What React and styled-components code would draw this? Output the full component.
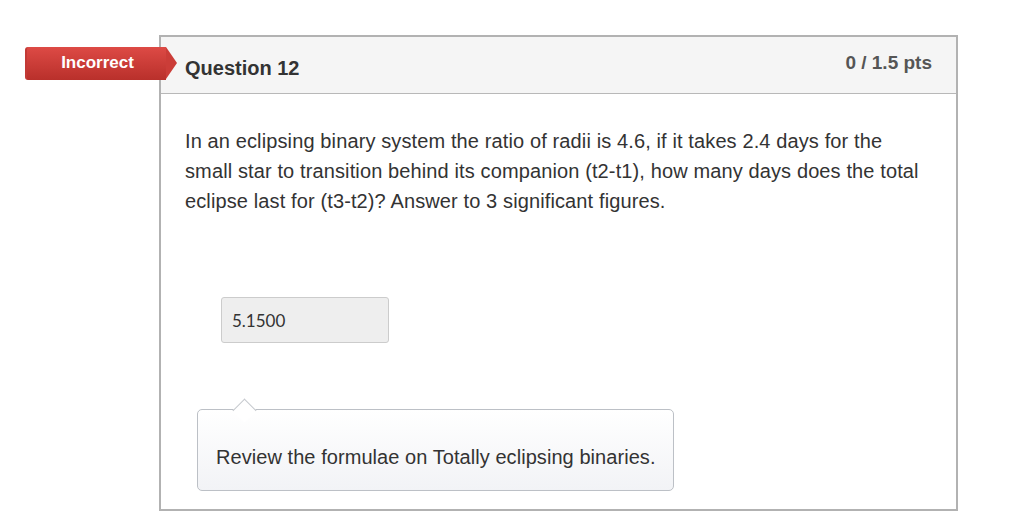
import React from "react";
import styled, { createGlobalStyle } from "styled-components";

const Global = createGlobalStyle`
  html, body { margin: 0; padding: 0; background: #fff; }
  body { font-family: "Liberation Sans", Arial, sans-serif; color: #333; }
`;

const Page = styled.div`
  padding: 35px 0 0 159px;
`;

const Card = styled.div`
  position: relative;
  width: 799px;
  height: 476px;
  box-sizing: border-box;
  border: 2px solid #b2b2b2;
  background: #fff;
`;

const Badge = styled.div`
  position: absolute;
  left: -136px;
  top: 10px;
  width: 141px;
  height: 33px;
  box-sizing: border-box;
  background: linear-gradient(#dd4a45, #b9302b);
  border-radius: 3px 0 0 3px;
  border-left: 2px solid #c23a36;
  color: #fff;
  font-weight: bold;
  font-size: 17px;
  display: flex;
  align-items: center;
  justify-content: center;
  padding-left: 2px;
  padding-bottom: 1px;
  &::after {
    content: "";
    position: absolute;
    right: -11px;
    top: 0;
    border-top: 16.5px solid transparent;
    border-bottom: 16.5px solid transparent;
    border-left: 11px solid #cb3d38;
  }
`;

const Header = styled.div`
  height: 56px;
  background: #f5f5f5;
  border-bottom: 1px solid #b8b8b8;
  display: flex;
  justify-content: space-between;
  padding: 0 24px 0 24px;
`;

const Title = styled.div`
  font-weight: bold;
  font-size: 20px;
  color: #333;
  padding-top: 20px;
`;

const Points = styled.div`
  font-weight: bold;
  font-size: 19px;
  color: #555;
  padding-top: 15px;
`;

const Body = styled.div`
  padding: 32px 24px 0 24px;
`;

const Question = styled.p`
  margin: 0;
  font-size: 20px;
  line-height: 30px;
  letter-spacing: 0.12px;
  color: #333;
  width: 742px;
`;

const Answer = styled.div`
  margin: 81px 0 0 36px;
  width: 168px;
  height: 46px;
  box-sizing: border-box;
  background: #eee;
  border: 1px solid #ccc;
  border-radius: 3px;
  font-family: Lato, "Open Sans", sans-serif;
  font-size: 17px;
  color: #333;
  display: flex;
  align-items: center;
  padding-left: 10px;
`;

const Comment = styled.div`
  position: relative;
  margin: 66px 0 0 12px;
  width: 477px;
  height: 82px;
  box-sizing: border-box;
  border: 1px solid #bcc0c6;
  border-radius: 5px;
  background: linear-gradient(#fff, #f2f3f6);
  padding: 34px 0 0 18px;
  font-size: 20px;
  line-height: 26px;
  letter-spacing: 0.06px;
  color: #333;
  &::before {
    content: "";
    position: absolute;
    left: 38px;
    top: -12px;
    width: 16px;
    height: 16px;
    background: #fff;
    border-top: 1px solid #c6c9ce;
    border-left: 1px solid #c6c9ce;
    transform: translateY(4px) rotate(45deg);
  }
`;

export default function App() {
  return (
    <>
      <Global />
      <Page>
        <Card>
          <Badge>Incorrect</Badge>
          <Header>
            <Title>Question 12</Title>
            <Points>0 / 1.5 pts</Points>
          </Header>
          <Body>
            <Question>
              In an eclipsing binary system the ratio of radii is 4.6, if it takes 2.4 days for the
              small star to transition behind its companion (t2-t1), how many days does the total
              eclipse last for (t3-t2)? Answer to 3 significant figures.
            </Question>
            <Answer>5.1500</Answer>
            <Comment>Review the formulae on Totally eclipsing binaries.</Comment>
          </Body>
        </Card>
      </Page>
    </>
  );
}
